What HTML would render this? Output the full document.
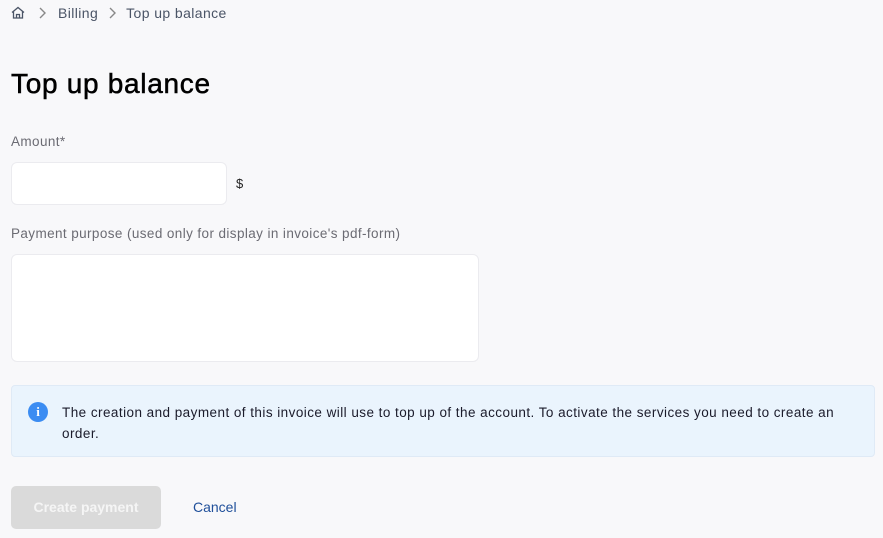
<!DOCTYPE html>
<html><head><meta charset="utf-8"><style>
*{box-sizing:border-box;margin:0;padding:0}
body{width:883px;height:538px;background:#f8f8fa;font-family:"Liberation Sans",sans-serif;position:relative;overflow:hidden;color:#1b1b1f}
.a{position:absolute}
.crumb{top:5px;left:10px;font-size:14px;color:#4a5466;display:flex;align-items:center;height:16px;letter-spacing:0.4px}
h1{position:absolute;left:11px;top:68px;font-size:28px;font-weight:normal;color:#000;letter-spacing:0.7px;-webkit-text-stroke:0.5px #000}
.lbl{font-size:13.5px;color:#6b6b73;letter-spacing:0.4px}
.inp{background:#fff;border:1px solid #ebebef;border-radius:6px}
.info{left:11px;top:385px;width:864px;height:72px;background:#eaf4fd;border:1px solid #dfeaf6;border-radius:4px}
.btn{left:11px;top:486px;width:150px;height:43px;background:#dadada;border-radius:5px;color:#f5f5f5;font-size:14px;font-weight:bold;text-align:center;line-height:43px}
</style></head><body>
<div class="a crumb">
<svg width="16" height="16" viewBox="0 0 16 16" fill="none" stroke="#4a5466" stroke-width="1.3"><path d="M2 7.5 8 2.5l6 5M3.5 6.5V13h9V6.5M6.5 13V9.5h3V13"/></svg>
<svg style="margin-left:11px" width="10" height="14" viewBox="0 0 10 14" fill="none" stroke="#888" stroke-width="1.4"><path d="M3 2l5 5-5 5"/></svg>
<span style="margin-left:11px">Billing</span>
<svg style="margin-left:9px" width="10" height="14" viewBox="0 0 10 14" fill="none" stroke="#888" stroke-width="1.4"><path d="M3 2l5 5-5 5"/></svg>
<span style="margin-left:9px">Top up balance</span>
</div>
<h1>Top up balance</h1>
<div class="a lbl" style="left:11px;top:134px">Amount*</div>
<div class="a inp" style="left:11px;top:162px;width:216px;height:43px"></div>
<div class="a" style="left:236px;top:176px;font-size:13px;color:#222">$</div>
<div class="a lbl" style="left:11px;top:226px">Payment purpose (used only for display in invoice's pdf-form)</div>
<div class="a inp" style="left:11px;top:254px;width:468px;height:108px"></div>
<div class="a info"></div>
<div class="a" style="left:28px;top:402px;width:20px;height:20px;border-radius:50%;background:#3b8cf2;color:#fff;font-weight:bold;font-size:13px;text-align:center;line-height:20px;font-family:'Liberation Serif',serif">i</div>
<div class="a" style="left:62px;top:402px;width:790px;font-size:13.5px;letter-spacing:0.45px;line-height:21px;color:#1b1b2b">The creation and payment of this invoice will use to top up of the account. To activate the services you need to create an order.</div>
<div class="a btn">Create payment</div>
<div class="a" style="left:193px;top:499px;font-size:14px;color:#1f4f9a">Cancel</div>
</body></html>
